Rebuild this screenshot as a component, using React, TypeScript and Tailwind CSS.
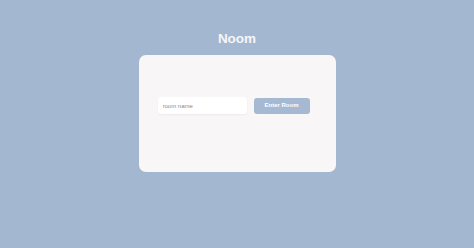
export default function App() {
  return (
    <div
      className="flex min-h-screen w-full flex-col items-center bg-[#a3b8d0]"
      style={{ fontFamily: '"Liberation Sans", Arial, sans-serif' }}
    >
      <h1 className="mt-[31px] text-[13.5px] font-bold leading-[16px] text-[#f4f6fa]">Noom</h1>
      <div className="mt-[8px] flex h-[117px] w-[197px] flex-col rounded-[7px] bg-[#f9f6f7] pl-[19px] pt-[42px]">
        <form className="flex items-center gap-[7px]" onSubmit={(e) => e.preventDefault()}>
          <input
            className="h-[17px] w-[89px] rounded-[3px] bg-white px-[5px] text-[6px] text-gray-600 shadow-[0_1px_2px_rgba(0,0,0,0.05)] outline-none placeholder:text-[#8a8a8a]"
            placeholder="room name"
          />
          <button className="h-[16px] w-[56px] rounded-[3px] bg-[#a5b9d3] text-[6px] font-bold text-white">
            Enter Room
          </button>
        </form>
      </div>
    </div>
  );
}
